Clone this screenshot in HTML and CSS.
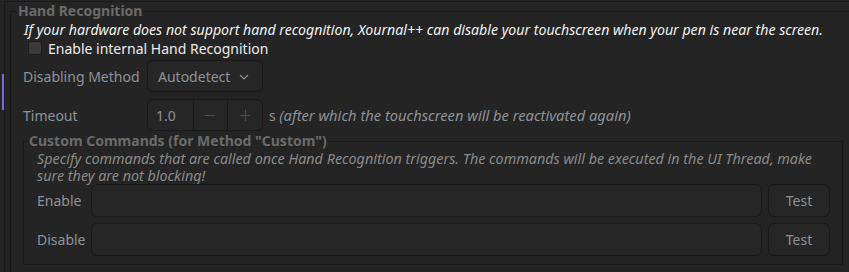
FILE: index.html
```html
<!DOCTYPE html>
<html>
<head>
<meta charset="utf-8">
<link rel="stylesheet" href="styles.css">
</head>
<body>
<div class="scroll-mark"></div>
<div class="viewport">
  <fieldset class="frame outer">
    <legend>Hand Recognition</legend>
    <p class="desc">If your hardware does not support hand recognition, Xournal++ can disable your touchscreen when your pen is near the screen.</p>
    <label class="check"><span class="box"></span>Enable internal Hand Recognition</label>
    <div class="form-grid">
      <span class="lbl">Disabling Method</span>
      <div class="combo"><span>Autodetect</span><svg class="chev" width="10" height="6" viewBox="0 0 10 6"><path d="M1 1 L5 5 L9 1" fill="none" stroke="#8d9298" stroke-width="1.1"/></svg></div>
      <span></span>
      <span class="lbl">Timeout</span>
      <div class="spin">
        <span class="val">1.0</span>
        <span class="sbtn"><svg width="12" height="12" viewBox="0 0 12 12"><path d="M1 6.5 H11" stroke="#4d4d4d" stroke-width="1"/></svg></span>
        <span class="sbtn"><svg width="12" height="12" viewBox="0 0 12 12"><path d="M1 6.5 H11 M6.5 1 V12" stroke="#4d4d4d" stroke-width="1"/></svg></span>
      </div>
      <span class="note">s <i>(after which the touchscreen will be reactivated again)</i></span>
    </div>
    <fieldset class="frame inner">
      <legend>Custom Commands (for Method "Custom")</legend>
      <p class="desc2"><span class="ln">Specify commands that are called once Hand Recognition triggers. The commands will be executed in the UI Thread, make</span><span class="ln">sure they are not blocking!</span></p>
      <div class="cmd-grid">
        <span class="lbl">Enable</span>
        <div class="entry"></div>
        <button class="btn">Test</button>
        <span class="lbl">Disable</span>
        <div class="entry"></div>
        <button class="btn">Test</button>
      </div>
    </fieldset>
  </fieldset>
</div>
</body>
</html>
```

FILE: styles.css
```css
html, body {
  margin: 0;
  padding: 0;
  background: #242424;
  overflow: hidden;
  height: 272px;
}
body {
  font-family: "Noto Sans", Lato, sans-serif;
  font-size: 14px;
  color: #8d9298;
  position: relative;
}
.scroll-mark {
  position: absolute;
  left: 2px;
  top: 74px;
  width: 2px;
  height: 36px;
  background: #7c68d8;
}
.viewport {
  margin: 1px 0 0 4px;
  border-top: 1px solid #1a1a1a;
  border-left: 1px solid #1a1a1a;
  width: 880px;
  height: 270px;
  overflow: hidden;
}
.frame {
  border: 1px solid #1a1a1a;
  margin: 0;
  min-inline-size: 0;
}
.frame > legend {
  padding: 0 1px;
  font-weight: bold;
  color: #6a6a6a;
  line-height: 16px;
  font-size: 14px;
}
.outer {
  margin: 1px 0 0 5px;
  padding: 2px 0 20px 6px;
}
.desc {
  margin: 0 0 0 7px;
  font-style: italic;
  font-size: 14.15px;
  color: #f2f2f2;
  line-height: 17px;
  white-space: nowrap;
}
.check {
  display: flex;
  align-items: center;
  height: 20px;
  margin-left: 11px;
  color: #ececec;
}
.box {
  width: 12px;
  height: 12px;
  border: 1px solid #1c1c1c;
  border-radius: 3px;
  background: #3a3a3a;
  margin-right: 6px;
}
.form-grid {
  display: grid;
  grid-template-columns: 124px 116px auto;
  grid-auto-rows: 32px;
  row-gap: 7px;
  align-items: center;
  margin: 2px 0 0 6px;
}
.combo, .spin {
  box-sizing: border-box;
  height: 32px;
  border: 1px solid #1a1a1a;
  border-radius: 6px;
  background: #262626;
  display: flex;
  align-items: center;
}
.combo {
  padding-left: 10px;
  gap: 9px;
}
.chev { margin-top: 1px; }
.spin .val {
  width: 46px;
  box-sizing: border-box;
  padding-left: 8px;
  height: 100%;
  display: flex;
  align-items: center;
}
.spin .sbtn {
  width: 35px;
  height: 100%;
  border-left: 1px solid #1a1a1a;
  display: flex;
  align-items: center;
  justify-content: center;
}
.note {
  padding-left: 6px;
  white-space: nowrap;
}
.note i { font-size: 14.7px; }
.inner {
  box-sizing: border-box;
  width: 820px;
  margin: 2px 0 0 6px;
  padding: 1px 12px 8px 13px;
}
.inner > legend { padding-left: 1px; margin-left: -9px; }
.desc2 {
  margin: 0;
  font-style: italic;
  font-size: 14.35px;
  color: #8a8a8a;
  white-space: nowrap;
}
.desc2 .ln {
  display: block;
  height: 17px;
  line-height: 17px;
}
.cmd-grid {
  display: grid;
  grid-template-columns: 54px 1fr 62px;
  grid-auto-rows: 33px;
  column-gap: 0;
  row-gap: 6px;
  align-items: center;
}
.entry {
  box-sizing: border-box;
  height: 33px;
  border: 1px solid #1a1a1a;
  border-radius: 6px;
  background: #262626;
  margin-right: 6px;
}
.btn {
  box-sizing: border-box;
  height: 33px;
  border: 1px solid #1a1a1a;
  border-radius: 6px;
  background: #262626;
  color: #8d9298;
  font: inherit;
  padding: 0;
}
```
